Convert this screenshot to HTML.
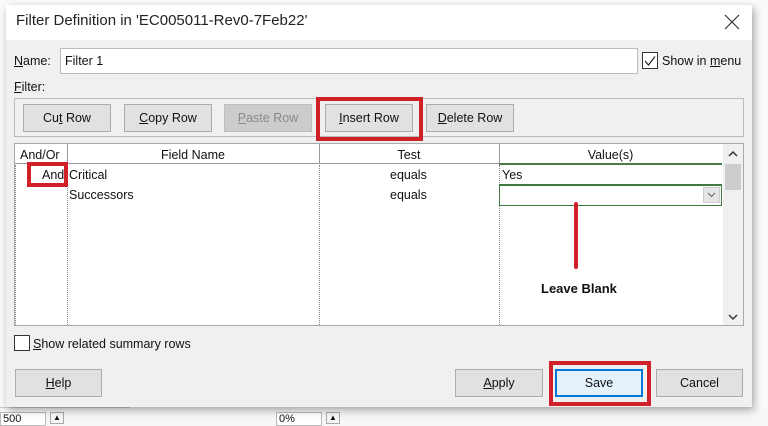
<!DOCTYPE html>
<html><head><style>
*{box-sizing:border-box;margin:0;padding:0}
body{width:768px;height:426px;overflow:hidden;background:#fff;font-family:"Liberation Sans",sans-serif;font-size:12.5px;color:#111;position:relative}
.a{position:absolute}
.btn{position:absolute;background:#e1e1e1;border:1px solid #adadad;text-align:center;line-height:26px;height:28px;font-size:12.5px}
.red{position:absolute;border:4px solid #d0202a}
.u{text-decoration:underline}
.vl{position:absolute;top:165px;height:160px;border-left:1px dotted #888}
</style></head><body>
<div class="a" style="left:0;top:0;width:768px;height:426px;background:#fafafa"></div>
<div class="a" style="left:0;top:407px;width:768px;height:19px;background:#f7f7f7"></div>
<div class="a" style="left:0;top:412px;width:46px;height:14px;background:#fff;border:1px solid #bbb;font-size:11px;padding-left:2px">500</div>
<div class="a" style="left:50px;top:412px;width:14px;height:12px;border:1px solid #aaa;font-size:8px;text-align:center">▲</div>
<div class="a" style="left:276px;top:412px;width:46px;height:14px;background:#fff;border:1px solid #bbb;font-size:11px;padding-left:2px">0%</div>
<div class="a" style="left:326px;top:412px;width:14px;height:12px;border:1px solid #aaa;font-size:8px;text-align:center">▲</div>
<div class="a" style="left:0;top:380px;width:130px;height:28px;border-bottom:1px solid #ccc"></div>
<div class="a" style="left:6px;top:5px;width:746px;height:402px;background:#f0f0f0;box-shadow:2px 3px 8px rgba(0,0,0,.35)"></div>
<div class="a" style="left:6px;top:5px;width:746px;height:35px;background:#fff"></div>
<div class="a" style="left:16px;top:12px;font-size:15px;color:#222">Filter Definition in 'EC005011-Rev0-7Feb22'</div>
<svg class="a" style="left:724px;top:14px" width="16" height="16"><path d="M1 1L15 15M15 1L1 15" stroke="#333" stroke-width="1.2"/></svg>
<div class="a" style="left:14px;top:54px"><span class="u">N</span>ame:</div>
<div class="a" style="left:60px;top:48px;width:578px;height:26px;background:#fff;border:1px solid #bbb;padding:5px 4px">Filter 1</div>
<div class="a" style="left:642px;top:52px;width:16px;height:17px;background:#fff;border:1px solid #333"></div>
<svg class="a" style="left:644px;top:55px" width="12" height="12"><path d="M1 6L4.5 10L11 1.5" fill="none" stroke="#222" stroke-width="1.2"/></svg>
<div class="a" style="left:662px;top:54px">Show in <span class="u">m</span>enu</div>
<div class="a" style="left:14px;top:80px"><span class="u">F</span>ilter:</div>
<div class="a" style="left:14px;top:98px;width:730px;height:39px;border:1px solid #bbb"></div>
<div class="btn" style="left:23px;top:104px;width:88px">Cu<span class="u">t</span> Row</div>
<div class="btn" style="left:124px;top:104px;width:88px"><span class="u">C</span>opy Row</div>
<div class="btn" style="left:224px;top:104px;width:88px;background:#ccc;border-color:#bfbfbf;color:#8a8a8a"><span class="u">P</span>aste Row</div>
<div class="btn" style="left:325px;top:104px;width:88px"><span class="u">I</span>nsert Row</div>
<div class="btn" style="left:426px;top:104px;width:88px"><span class="u">D</span>elete Row</div>
<div class="red" style="left:316px;top:97px;width:107px;height:44px"></div>
<div class="a" style="left:14px;top:143px;width:730px;height:183px;background:#fff;border:1px solid #aaa"></div>
<div class="a" style="left:15px;top:144px;width:707px;height:20px;border-bottom:1px solid #999"></div>
<div class="a" style="left:67px;top:144px;height:20px;border-left:1px solid #999"></div>
<div class="a" style="left:319px;top:144px;height:20px;border-left:1px solid #999"></div>
<div class="a" style="left:499px;top:144px;height:20px;border-left:1px solid #999"></div>
<div class="a" style="left:20px;top:148px">And/Or</div>
<div class="a" style="left:67px;top:148px;width:252px;text-align:center">Field Name</div>
<div class="a" style="left:319px;top:148px;width:180px;text-align:center">Test</div>
<div class="a" style="left:499px;top:148px;width:223px;text-align:center">Value(s)</div>
<div class="vl" style="left:15px"></div><div class="vl" style="left:67px"></div><div class="vl" style="left:319px"></div><div class="vl" style="left:499px"></div>
<div class="a" style="left:499px;top:163px;width:223px;height:2px;background:#4a7a4a"></div>
<div class="a" style="left:499px;top:184px;width:223px;height:22px;border:1px solid #3f7a3f;border-top-width:2px"></div>
<div class="a" style="left:703px;top:187px;width:17px;height:16px;background:#e6e6e6;border:1px solid #ccc"></div>
<svg class="a" style="left:707px;top:192px" width="9" height="6"><path d="M1 1L4.5 4.5L8 1" fill="none" stroke="#666" stroke-width="1"/></svg>
<div class="a" style="left:42px;top:168px">And</div>
<div class="a" style="left:69px;top:168px">Critical</div>
<div class="a" style="left:69px;top:188px">Successors</div>
<div class="a" style="left:390px;top:168px">equals</div>
<div class="a" style="left:390px;top:188px">equals</div>
<div class="a" style="left:502px;top:168px">Yes</div>
<div class="red" style="left:27px;top:162px;width:41px;height:25px"></div>
<div class="a" style="left:723px;top:144px;width:20px;height:181px;background:#f0f0f0"></div>
<div class="a" style="left:725px;top:164px;width:16px;height:26px;background:#cdcdcd"></div>
<svg class="a" style="left:728px;top:150px" width="10" height="7"><path d="M1 6L5 2L9 6" fill="none" stroke="#333" stroke-width="1.5"/></svg>
<svg class="a" style="left:728px;top:314px" width="10" height="7"><path d="M1 1L5 5L9 1" fill="none" stroke="#333" stroke-width="1.5"/></svg>
<div class="a" style="left:574px;top:202px;width:4px;height:67px;background:#d0202a;border-radius:2px"></div>
<div class="a" style="left:541px;top:281px;font-weight:bold;font-size:13px">Leave Blank</div>
<div class="a" style="left:14px;top:335px;width:16px;height:16px;background:#fff;border:1px solid #333"></div>
<div class="a" style="left:33px;top:337px"><span class="u">S</span>how related summary rows</div>
<div class="btn" style="left:15px;top:369px;width:87px"><span class="u">H</span>elp</div>
<div class="btn" style="left:455px;top:369px;width:88px"><span class="u">A</span>pply</div>
<div class="btn" style="left:555px;top:369px;width:88px;background:#e5f1fb;border:2px solid #0078d7;line-height:24px">Save</div>
<div class="btn" style="left:656px;top:369px;width:87px">Cancel</div>
<div class="red" style="left:549px;top:361px;width:102px;height:45px"></div>
</body></html>
